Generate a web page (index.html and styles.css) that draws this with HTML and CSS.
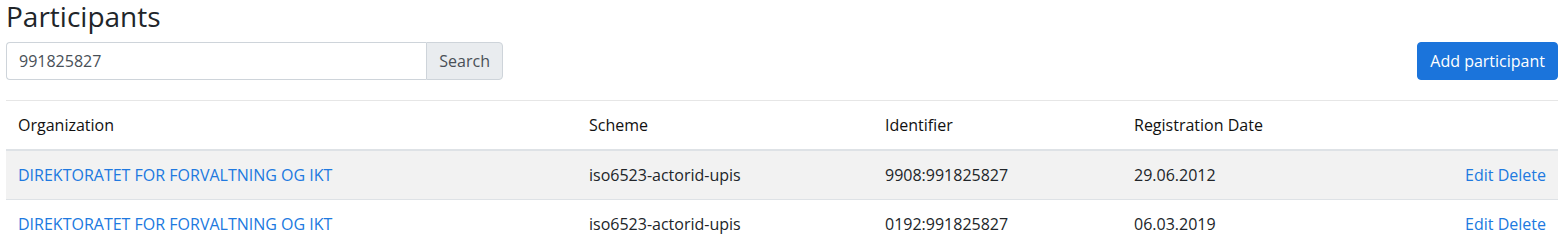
FILE: index.html
```html
<!DOCTYPE html>
<html lang="en">
<head>
<meta charset="UTF-8">
<meta name="viewport" content="width=device-width, initial-scale=1.0">
<title>Participants</title>
<link rel="stylesheet" href="styles.css">
</head>
<body>
<div class="container">
  <h3 class="title">Participants</h3>
  <div class="toolbar">
    <div class="search-group">
      <input type="text" class="search-input" value="991825827">
      <button class="search-btn">Search</button>
    </div>
    <button class="add-btn">Add participant</button>
  </div>
  <table class="table">
    <thead>
      <tr>
        <th class="col-org">Organization</th>
        <th class="col-scheme">Scheme</th>
        <th class="col-id">Identifier</th>
        <th class="col-date">Registration Date</th>
        <th class="col-actions"></th>
      </tr>
    </thead>
    <tbody>
      <tr>
        <td><a href="#">DIREKTORATET FOR FORVALTNING OG IKT</a></td>
        <td>iso6523-actorid-upis</td>
        <td>9908:991825827</td>
        <td>29.06.2012</td>
        <td class="actions"><a href="#">Edit</a> <a href="#">Delete</a></td>
      </tr>
      <tr>
        <td><a href="#">DIREKTORATET FOR FORVALTNING OG IKT</a></td>
        <td>iso6523-actorid-upis</td>
        <td>0192:991825827</td>
        <td>06.03.2019</td>
        <td class="actions"><a href="#">Edit</a> <a href="#">Delete</a></td>
      </tr>
    </tbody>
  </table>
</div>
</body>
</html>
```

FILE: styles.css
```css
body {
  font-family: "Open Sans", sans-serif;
  font-size: 16px;
  line-height: 24px;
  color: #212529;
  margin: 0;
  background: #fff;
}
.container {
  padding: 0 9px 0 6px;
}
.title {
  font-size: 28px;
  font-weight: 400;
  line-height: 1.2;
  margin: 0 0 8px 0;
}
.toolbar {
  display: flex;
  justify-content: space-between;
  align-items: center;
  margin-bottom: 20px;
}
.search-group {
  display: flex;
  width: 497px;
  height: 38px;
}
.search-input {
  flex: 1;
  min-width: 0;
  font-family: inherit;
  font-size: 16px;
  color: #495057;
  padding: 6px 12px;
  border: 1px solid #ced4da;
  border-right: none;
  border-radius: 4px 0 0 4px;
  box-sizing: border-box;
  outline: none;
}
.search-btn {
  font-family: inherit;
  font-size: 16px;
  color: #495057;
  background: #e9ecef;
  border: 1px solid #ced4da;
  border-radius: 0 4px 4px 0;
  padding: 0 12px;
}
.add-btn {
  font-family: inherit;
  font-size: 16px;
  color: #fff;
  background: #1b74db;
  border: 1px solid #1b74db;
  border-radius: 4px;
  height: 38px;
  padding: 0 12px;
}
.table {
  width: 100%;
  border-collapse: collapse;
}
.table th,
.table td {
  text-align: left;
  padding: 12px;
  border-top: 1px solid #dee2e6;
}
.table th {
  font-weight: 500;
  color: #111;
  border-bottom: 2px solid #dee2e6;
}
.table thead th {
  border-top: 1px solid #e6e6e6;
}
.table tbody tr:nth-child(odd) {
  background: #f2f2f2;
}
.col-org { width: 547px; }
.col-scheme { width: 272px; }
.col-id { width: 225px; }
.table a {
  color: #2079e0;
  text-decoration: none;
}
.actions {
  text-align: right !important;
}
```
